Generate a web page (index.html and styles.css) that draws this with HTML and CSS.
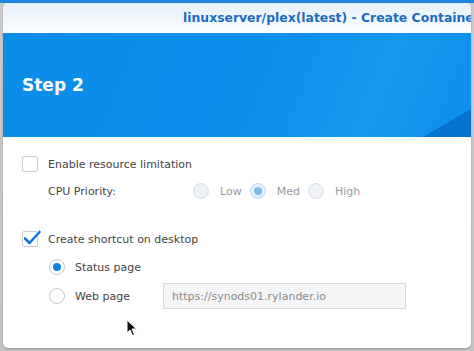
FILE: index.html
```html
<!DOCTYPE html>
<html lang="en">
<head>
    <meta charset="UTF-8">
    <meta name="viewport" content="width=device-width, initial-scale=1.0">
    <title>Create Container</title>
    <link rel="stylesheet" href="styles.css">
</head>
<body>
    <div class="dialog">
        <div class="titlebar">linuxserver/plex(latest) - Create Container</div>

        <div class="hero">
            <h1>Step 2</h1>
        </div>

        <div class="content">
            <!-- Resource limit -->
            <div class="row first">
                <span class="checkbox"></span>
                <span class="label">Enable resource limitation</span>
            </div>
            <div class="row priority">
                <span class="sub-label">CPU Priority:</span>
                <span class="radio disabled"></span>
                <span class="opt">Low</span>
                <span class="radio disabled checked"></span>
                <span class="opt">Med</span>
                <span class="radio disabled"></span>
                <span class="opt">High</span>
            </div>

            <!-- Shortcut -->
            <div class="row shortcut">
                <span class="checkbox on">
                    <svg width="20" height="18" viewBox="0 0 20 18">
                        <path d="M3 9.5 L7.5 14 L17.5 3" fill="none" stroke="#1677d2" stroke-width="2.6" stroke-linecap="round" stroke-linejoin="round"/>
                    </svg>
                </span>
                <span class="label">Create shortcut on desktop</span>
            </div>
            <div class="row indent">
                <span class="radio selected"></span>
                <span class="label">Status page</span>
            </div>
            <div class="row indent web">
                <span class="radio"></span>
                <span class="label web-label">Web page</span>
                <input class="url" type="text" value="https://synods01.rylander.io" disabled>
            </div>
        </div>

        <svg class="cursor" width="12" height="18" viewBox="0 0 12 18">
            <path d="M1 1 L1 14 L4 11 L6.5 16.5 L8.5 15.5 L6 10 L10.5 10 Z" fill="#111" stroke="#fff" stroke-width="1"/>
        </svg>
    </div>
</body>
</html>
```

FILE: styles.css
```css
* {
    margin: 0;
    padding: 0;
    box-sizing: border-box;
}

body {
    width: 474px;
    height: 351px;
    overflow: hidden;
    padding: 3px;
    background: linear-gradient(#1f84dc 0, #1f84dc 3px, #cbcbcb 3px, #c4c4c4 100%);
    font-family: 'DejaVu Sans', Verdana, sans-serif;
    color: #444;
}

.dialog {
    position: relative;
    height: 345px;
    background: #fff;
    border-radius: 5px;
    overflow: hidden;
    box-shadow: 0 1px 2px rgba(0, 0, 0, 0.25);
}

/* Title bar */
.titlebar {
    height: 30px;
    line-height: 30px;
    padding-left: 180px;
    white-space: nowrap;
    overflow: hidden;
    font-size: 12.4px;
    font-weight: bold;
    color: #1a6cc2;
    background: linear-gradient(#e6f0fa, #fbfdff);
}

/* Blue header */
.hero {
    position: relative;
    height: 104px;
    display: flex;
    align-items: center;
    padding-left: 19px;
    background: linear-gradient(112deg, #0a8ce8 0%, #0b8eeb 45%, #0e90ec 60%, #1698ef 78%, #0d8eea 100%);
}

.hero::after {
    content: "";
    position: absolute;
    inset: 0;
    background: #0773d0;
    clip-path: polygon(420px 104px, 468px 76px, 468px 104px);
}

.hero h1 {
    font-size: 17px;
    font-weight: bold;
    color: #fff;
}

/* Form body */
.content {
    padding: 15px 19px 0 19px;
}

.row {
    display: flex;
    align-items: center;
    height: 24px;
    font-size: 11px;
}

.priority {
    margin-top: 3px;
    padding-left: 26px;
}

.shortcut {
    margin-top: 24px;
}

.indent {
    margin-top: 4px;
    padding-left: 27px;
}

.web {
    margin-top: 3px;
    height: 28px;
}

.checkbox {
    position: relative;
    width: 16px;
    height: 16px;
    border: 1px solid #c9cdd2;
    border-radius: 2px;
    background: #fff;
    margin-right: 10px;
    flex-shrink: 0;
}

.checkbox svg {
    position: absolute;
    left: -1px;
    top: -3px;
}

.label {
    color: #444;
}

.sub-label {
    width: 145px;
    color: #444;
}

.radio {
    position: relative;
    width: 16px;
    height: 16px;
    border: 1px solid #c6cbd1;
    border-radius: 50%;
    background: #fff;
    margin-right: 10px;
    flex-shrink: 0;
}

.radio.disabled {
    background: #eef1f5;
    border-color: #d9dee4;
    margin-right: 11px;
}

.radio.checked {
    background: #e6f1fb;
    border-color: #b9d7f1;
}

.radio.checked::after,
.radio.selected::after {
    content: "";
    position: absolute;
    left: 3px;
    top: 3px;
    width: 8px;
    height: 8px;
    border-radius: 50%;
    background: #7fbbe8;
}

.radio.selected::after {
    background: #0a84e0;
}

.opt {
    color: #9a9a9a;
    margin-right: 8px;
}

.web-label {
    width: 88px;
}

.url {
    width: 243px;
    height: 26px;
    padding-left: 8px;
    border: 1px solid #d3d7dc;
    background: #f4f5f6;
    font-family: 'DejaVu Sans', Verdana, sans-serif;
    font-size: 11px;
    color: #8a8a8a;
}

.cursor {
    position: absolute;
    left: 123px;
    top: 316px;
}
```
